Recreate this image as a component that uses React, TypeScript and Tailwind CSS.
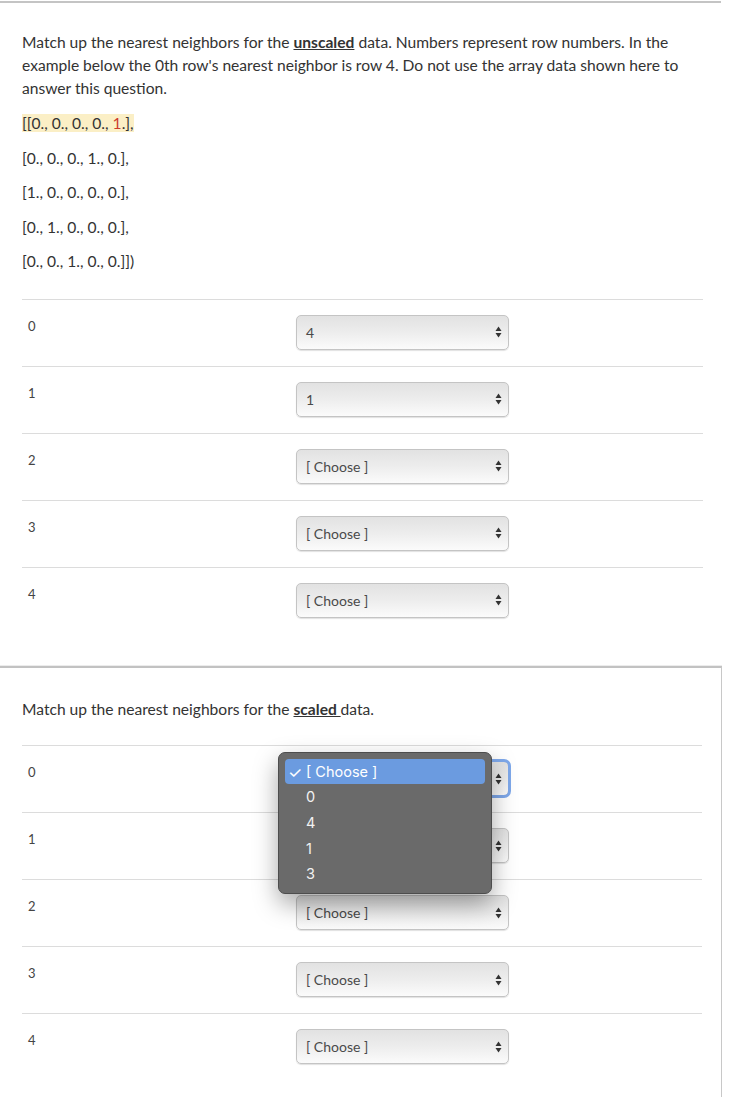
import React from 'react'

const lato = { fontFamily: 'Lato, "Open Sans", sans-serif' }

function Arrows() {
  return (
    <svg width="7" height="12" viewBox="0 0 7 12" className="shrink-0">
      <path d="M3.5 0.5 L6.5 5 L0.5 5 Z" fill="#333" />
      <path d="M3.5 11.5 L6.5 7 L0.5 7 Z" fill="#333" />
    </svg>
  )
}

function SelectBox({ value, focused }: { value: string; focused?: boolean }) {
  return (
    <div
      className={`w-[213px] h-[35px] rounded-[5px] border border-[#c4c4c4] bg-gradient-to-b from-[#e2e2e2] via-[#ededed] to-[#fbfbfb] shadow-[0_1px_1px_rgba(0,0,0,0.12)] flex items-center justify-between pl-[9px] pr-[6px] ${
        focused ? 'outline-[3px] outline-solid outline-[#7ea8ea] outline-offset-[-1px]' : ''
      }`}
    >
      <span className="text-[14px] text-[#4a4a4a]" style={lato}>
        {value}
      </span>
      <Arrows />
    </div>
  )
}

function DropMenu() {
  const items = ['0', '4', '1', '3']
  return (
    <div
      className="absolute left-[-18px] top-[-9px] z-10 w-[214px] h-[142px] rounded-[7px] bg-[#6a6a6a] border border-[#4d4d4d] shadow-[0_10px_24px_rgba(0,0,0,0.35)] p-[6px] text-[14.5px]"
      style={{ fontFamily: 'Inter, "Liberation Sans", sans-serif' }}
    >
      <div className="h-[25px] rounded-[4px] bg-[#6b9be0] flex items-center text-white pl-[3px]">
        <span className="w-[18px] text-[16px] leading-none">✓</span>
        <span>[ Choose ]</span>
      </div>
      {items.map((i) => (
        <div key={i} className="h-[25.7px] flex items-center pl-[21px] text-[#f2f2f2]">
          {i}
        </div>
      ))}
    </div>
  )
}

function Row({ label, value, focused, menu }: { label: string; value: string; focused?: boolean; menu?: boolean }) {
  return (
    <div className="flex border-t border-[#dcdcdc] pt-[15px] pb-[16px]">
      <div className="w-[274px] pl-[6px] text-[13px] leading-[22px] text-[#444]" style={lato}>
        {label}
      </div>
      <div className="relative">
        <SelectBox value={value} focused={focused} />
        {menu && <DropMenu />}
      </div>
    </div>
  )
}

export default function App() {
  return (
    <div className="bg-white w-[736px] min-h-[1114px] text-[#333]" style={lato}>
      {/* Unscaled question */}
      <div className="mt-[1px] w-[721px] border-t-2 border-[#c4c4c4] pt-[28px] pb-[32px] pl-[22px] pr-[18px]">
        <div className="flex flex-col text-[15.6px] leading-[23px]">
          <p className="mb-[12px]">
            Match up the nearest neighbors for the{' '}
            <u className="font-bold">unscaled</u> data. Numbers represent row numbers. In the example below the 0th
            row's nearest neighbor is row 4. Do not use the array data shown here to answer this question.
          </p>
          <p className="mb-[11.5px]">
            <span className="bg-[#fbefc6]">
              [[0., 0., 0., 0., <span className="text-[#cc3b2e]">1</span>.],
            </span>
          </p>
          <p className="mb-[11.5px]">[0., 0., 0., 1., 0.],</p>
          <p className="mb-[11.5px]">[1., 0., 0., 0., 0.],</p>
          <p className="mb-[11.5px]">[0., 1., 0., 0., 0.],</p>
          <p className="mb-[11.5px]">[0., 0., 1., 0., 0.]])</p>
          <div className="mt-[14px]">
            <Row label="0" value="4" />
            <Row label="1" value="1" />
            <Row label="2" value="[ Choose ]" />
            <Row label="3" value="[ Choose ]" />
            <Row label="4" value="[ Choose ]" />
          </div>
        </div>
      </div>

      {/* Scaled question */}
      <div className="w-[722px] border-t-2 border-r border-t-[#c2c2c2] border-r-[#c8c8c8] shadow-[0_-1px_0_#ececec] pt-[30px] pb-[17px] pl-[22px] pr-[19px]">
        <div className="flex flex-col text-[15.6px] leading-[23px]">
          <p className="mb-[12px]">
            Match up the nearest neighbors for the <u className="font-bold">scaled </u>data.
          </p>
          <div className="mt-[12.5px]">
            <Row label="0" value="[ Choose ]" focused menu />
            <Row label="1" value="[ Choose ]" />
            <Row label="2" value="[ Choose ]" />
            <Row label="3" value="[ Choose ]" />
            <Row label="4" value="[ Choose ]" />
          </div>
        </div>
      </div>
    </div>
  )
}
